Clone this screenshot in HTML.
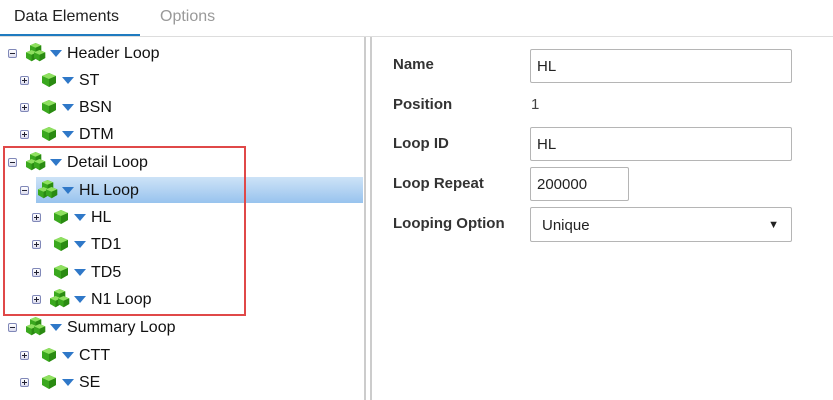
<!DOCTYPE html>
<html><head><style>
body{margin:0;width:833px;height:400px;overflow:hidden;background:#fff;font-family:"Liberation Sans",sans-serif;position:relative}
.a{position:absolute}
.tab{font-size:16px}
.row{position:absolute;height:26px;left:0;width:365px}
.row span.t{position:absolute;top:5px;font-size:16px;color:#111}
.bx{position:absolute;top:9px;width:9px;height:9px;border:1px solid #8088b8;border-radius:2px;background:linear-gradient(#fff,#dde);box-sizing:border-box}
.bx:before{content:"";position:absolute;left:1px;right:1px;top:3px;height:1px;background:#223}
.bx.p:after{content:"";position:absolute;top:1px;bottom:1px;left:3px;width:1px;background:#223}
.ar{position:absolute;top:10px;width:0;height:0;border-left:6px solid transparent;border-right:6px solid transparent;border-top:7px solid #2f78c8}
svg{position:absolute}
.lbl{position:absolute;left:393px;font-size:15px;font-weight:bold;color:#333}
.in{position:absolute;border:1px solid #b5b5b5;border-radius:2px;box-sizing:border-box;font-size:15px;color:#222;padding:8px 0 0 6px}
</style></head><body>
<div class="a tab" style="left:14px;top:8px;color:#222">Data Elements</div>
<div class="a tab" style="left:160px;top:8px;color:#999">Options</div>
<div class="a" style="left:0;top:36px;width:833px;height:1px;background:#ddd"></div>
<div class="a" style="left:0;top:34px;width:140px;height:2px;background:#1f7bc0"></div>
<div class="a" style="left:364px;top:37px;width:2px;height:363px;background:#ccc"></div>
<div class="a" style="left:370px;top:37px;width:2px;height:363px;background:#ccc"></div>
<div class="a" style="left:36px;top:177px;width:327px;height:26px;background:linear-gradient(#cde3f7,#98c3ee)"></div>

<svg width="0" height="0"><defs>
<g id="c"><polygon points="7,0 14,3 14,10 7,14 0,10 0,3" fill="#3aa81e"/><polygon points="7,0 14,3 7,6 0,3" fill="#8fe060"/><polygon points="7,6 14,3 14,10 7,14" fill="#2a8a12"/></g>
</defs></svg>

<div id="tree"></div>
<script>
var rows=[[0,53,'m',0,'Header Loop'],[1,80,'p',1,'ST'],[1,107,'p',1,'BSN'],[1,134,'p',1,'DTM'],[0,162,'m',0,'Detail Loop'],[1,190,'m',0,'HL Loop'],[2,217,'p',1,'HL'],[2,244,'p',1,'TD1'],[2,272,'p',1,'TD5'],[2,299,'p',0,'N1 Loop'],[0,327,'m',0,'Summary Loop'],[1,355,'p',1,'CTT'],[1,382,'p',1,'SE']];
var h='';
rows.forEach(function(r){var o=r[0]*12,top=r[1]-13;
h+='<div class="row" style="top:'+top+'px">';
h+='<div class="bx '+r[2]+'" style="left:'+(8+o)+'px"></div>';
if(r[3]){h+='<svg style="left:'+(30+o)+'px;top:6px" width="14" height="14"><use href="#c"/></svg>';}
else{h+='<svg style="left:'+(26+o)+'px;top:3px" width="20" height="19"><g transform="translate(4,0) scale(.8)"><use href="#c"/></g><g transform="translate(0,7) scale(.8)"><use href="#c"/></g><g transform="translate(8,7) scale(.8)"><use href="#c"/></g></svg>';}
h+='<div class="ar" style="left:'+(50+o)+'px"></div>';
h+='<span class="t" style="left:'+(67+o)+'px">'+r[4]+'</span></div>';});
document.getElementById('tree').innerHTML=h;
</script>
<div class="a" style="left:3px;top:146px;width:243px;height:170px;border:2px solid #e04848;box-sizing:border-box"></div>

<div class="lbl" style="top:56px">Name</div>
<div class="lbl" style="top:96px">Position</div>
<div class="a" style="left:531px;top:96px;font-size:15px;color:#444">1</div>
<div class="lbl" style="top:135px">Loop ID</div>
<div class="lbl" style="top:175px">Loop Repeat</div>
<div class="lbl" style="top:215px">Looping Option</div>
<div class="in" style="left:530px;top:49px;width:262px;height:34px">HL</div>
<div class="in" style="left:530px;top:127px;width:262px;height:34px">HL</div>
<div class="in" style="left:530px;top:167px;width:99px;height:34px">200000</div>
<div class="in" style="left:530px;top:207px;width:262px;height:35px;padding-left:11px;padding-top:9px">Unique<span style="position:absolute;right:12px;top:11px;font-size:11px">&#9660;</span></div>
</body></html>
